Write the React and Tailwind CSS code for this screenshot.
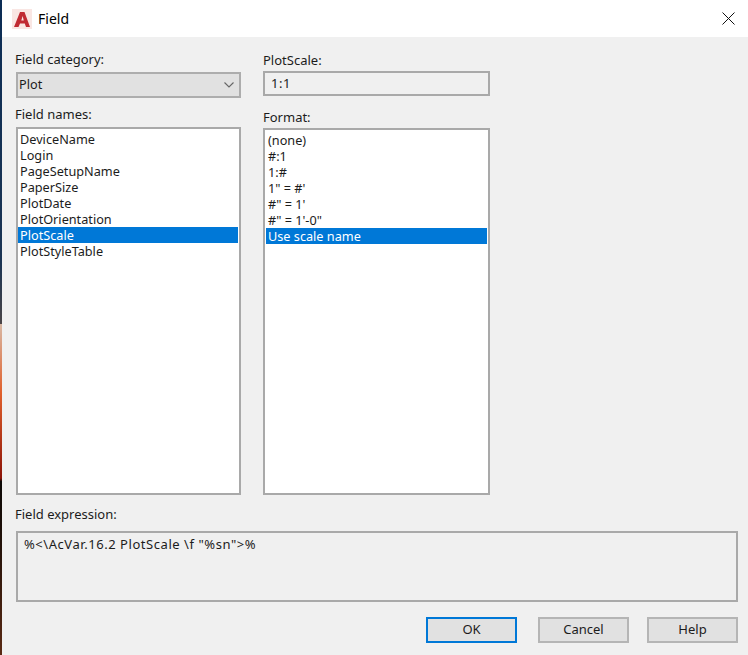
import React from "react";

const fieldNames = [
  "DeviceName",
  "Login",
  "PageSetupName",
  "PaperSize",
  "PlotDate",
  "PlotOrientation",
  "PlotScale",
  "PlotStyleTable",
];

const formats = ["(none)", "#:1", "1:#", '1" = #\'', '#" = 1\'', '#" = 1\'-0"', "Use scale name"];

const ListBox = ({ items, selected, className }) => (
  <div className={"border-2 border-[#a9a9a9] bg-white pt-[2px] text-[12.7px] " + className}>
    {items.map((item) => (
      <div
        key={item}
        className={
          "h-4 px-[2px] leading-4 " + (item === selected ? "bg-[#0078d7] text-white" : "")
        }
      >
        {item}
      </div>
    ))}
  </div>
);

const DialogButton = ({ label, primary }) => (
  <button
    className={
      "h-[26px] w-[91px] border-2 bg-[#e1e1e1] " +
      (primary ? "border-[#0078d7]" : "border-[#b5b5b5]")
    }
  >
    {label}
  </button>
);

const App = () => {
  return (
    <div className="flex h-[655px] w-[748px] overflow-hidden bg-[#f0f0f0] font-['Noto_Sans',sans-serif] text-[13px] text-[#1c1c1c]">
      <div className="w-[2px] bg-[linear-gradient(to_bottom,#0c2d55_0%,#1c3554_40%,#4a4548_49.4%,#d8b8a4_49.5%,#e0602c_60%,#8c1408_73%,#0e0a08_73.5%,#1a0e08_80%,#5a2a14_100%)]"></div>
      <div className="flex min-w-0 flex-1 flex-col">
        <div className="flex h-[37px] items-center bg-white pl-[10px] pr-[13px]">
          <svg width="20" height="20" viewBox="0 0 20 20">
            <rect width="20" height="20" fill="#f9e6e3" />
            <path d="M2 18 L8 3 H12.5 L18 18 H14 L12.8 14.5 H8 L6.5 18 Z M9.3 11.5 H11.8 L10.6 7 Z" fill="#c02a32" fillRule="evenodd" />
          </svg>
          <span className="ml-[6px] text-[14px] text-black">Field</span>
          <svg className="ml-auto" width="13" height="13" viewBox="0 0 13 13">
            <path d="M0.5 0.5 L12.5 12.5 M12.5 0.5 L0.5 12.5" stroke="#111" strokeWidth="1" />
          </svg>
        </div>

        <div className="flex gap-[22px] pl-[14px] pt-[14px]">
          <div className="flex w-[225px] flex-col">
            <label className="-ml-px h-[21px] leading-[17px]">Field category:</label>
            <div className="flex h-[26px] items-center justify-between border-2 border-[#adadad] bg-[#e1e1e1] pl-px pr-[5px] text-[12.7px]">
              <span>Plot</span>
              <svg width="10" height="6" viewBox="0 0 10 6">
                <path d="M0.5 0.5 L5 5 L9.5 0.5" fill="none" stroke="#666" strokeWidth="1.1" />
              </svg>
            </div>
            <label className="-ml-px mt-[8px] h-[21px] leading-4">Field names:</label>
            <ListBox items={fieldNames} selected="PlotScale" className="h-[368px] pr-px" />
          </div>

          <div className="flex w-[227px] flex-col">
            <label className="h-[20px] leading-[18px]">PlotScale:</label>
            <div className="flex h-[25px] items-center border-2 border-[#a9a9a9] pl-[6px] tracking-[0.6px]">
              1:1
            </div>
            <label className="mt-[13px] h-[19px] leading-4">Format:</label>
            <ListBox items={formats} selected="Use scale name" className="h-[367px] px-px" />
          </div>
        </div>

        <div className="mt-[11px] pl-[14px] pr-[10px]">
          <label className="-ml-px block h-[25px] leading-4">Field expression:</label>
          <div className="h-[71px] border-2 border-[#a9a9a9] pl-[6px] pt-[2px] leading-[18px] tracking-[0.55px]">
            {'%<\\AcVar.16.2 PlotScale \\f "%sn">%'}
          </div>
        </div>

        <div className="mt-[15px] flex pl-[424px]">
          <DialogButton label="OK" primary />
          <div className="ml-[21px]">
            <DialogButton label="Cancel" />
          </div>
          <div className="ml-[18px]">
            <DialogButton label="Help" />
          </div>
        </div>
      </div>
    </div>
  );
};

export default App;
